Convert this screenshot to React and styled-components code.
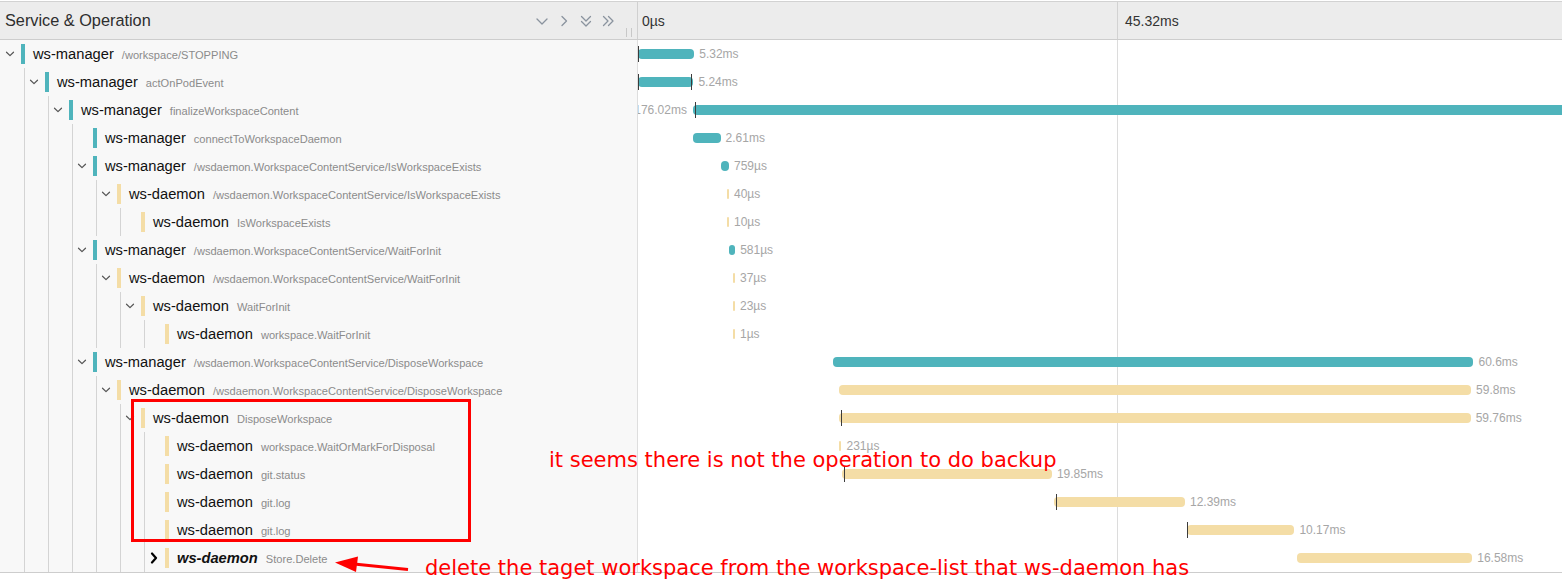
import React from 'react';
import styled, { createGlobalStyle } from 'styled-components';

const GlobalStyle = createGlobalStyle`
  html, body {
    margin: 0;
    padding: 0;
    background: #fff;
  }
  body {
    font-family: "Liberation Sans", Arial, sans-serif;
  }
`;

const TEAL = '#4fb4bc';
const SAND = '#f4dda6';
const PX_PER_MS = 479 / 45.32;

const spans = [
  { depth: 0, service: 'ws-manager', op: '/workspace/STOPPING', color: TEAL, toggle: 'open', start: 0, dur: 5.32, label: '5.32ms', logs: [0] },
  { depth: 1, service: 'ws-manager', op: 'actOnPodEvent', color: TEAL, toggle: 'open', start: 0, dur: 5.24, label: '5.24ms', logs: [0, 5.0] },
  { depth: 2, service: 'ws-manager', op: 'finalizeWorkspaceContent', color: TEAL, toggle: 'open', start: 5.2, dur: 176.02, label: '176.02ms', labelLeft: true, logs: [5.39] },
  { depth: 3, service: 'ws-manager', op: 'connectToWorkspaceDaemon', color: TEAL, start: 5.2, dur: 2.61, label: '2.61ms' },
  { depth: 3, service: 'ws-manager', op: '/wsdaemon.WorkspaceContentService/IsWorkspaceExists', color: TEAL, toggle: 'open', start: 7.85, dur: 0.759, label: '759µs' },
  { depth: 4, service: 'ws-daemon', op: '/wsdaemon.WorkspaceContentService/IsWorkspaceExists', color: SAND, toggle: 'open', start: 8.42, dur: 0.04, label: '40µs' },
  { depth: 5, service: 'ws-daemon', op: 'IsWorkspaceExists', color: SAND, start: 8.42, dur: 0.01, label: '10µs' },
  { depth: 3, service: 'ws-manager', op: '/wsdaemon.WorkspaceContentService/WaitForInit', color: TEAL, toggle: 'open', start: 8.61, dur: 0.581, label: '581µs' },
  { depth: 4, service: 'ws-daemon', op: '/wsdaemon.WorkspaceContentService/WaitForInit', color: SAND, toggle: 'open', start: 8.99, dur: 0.037, label: '37µs' },
  { depth: 5, service: 'ws-daemon', op: 'WaitForInit', color: SAND, toggle: 'open', start: 8.99, dur: 0.023, label: '23µs' },
  { depth: 6, service: 'ws-daemon', op: 'workspace.WaitForInit', color: SAND, start: 8.99, dur: 0.001, label: '1µs' },
  { depth: 3, service: 'ws-manager', op: '/wsdaemon.WorkspaceContentService/DisposeWorkspace', color: TEAL, toggle: 'open', start: 18.45, dur: 60.6, label: '60.6ms' },
  { depth: 4, service: 'ws-daemon', op: '/wsdaemon.WorkspaceContentService/DisposeWorkspace', color: SAND, toggle: 'open', start: 19.02, dur: 59.8, label: '59.8ms' },
  { depth: 5, service: 'ws-daemon', op: 'DisposeWorkspace', color: SAND, toggle: 'open', start: 19.02, dur: 59.76, label: '59.76ms', logs: [19.21] },
  { depth: 6, service: 'ws-daemon', op: 'workspace.WaitOrMarkForDisposal', color: SAND, start: 19.02, dur: 0.231, label: '231µs' },
  { depth: 6, service: 'ws-daemon', op: 'git.status', color: SAND, start: 19.31, dur: 19.85, label: '19.85ms', logs: [19.49] },
  { depth: 6, service: 'ws-daemon', op: 'git.log', color: SAND, start: 39.36, dur: 12.39, label: '12.39ms', logs: [39.55] },
  { depth: 6, service: 'ws-daemon', op: 'git.log', color: SAND, start: 51.94, dur: 10.17, label: '10.17ms', logs: [51.94] },
  { depth: 6, service: 'ws-daemon', op: 'Store.Delete', color: SAND, toggle: 'closed', emphasis: true, start: 62.35, dur: 16.58, label: '16.58ms' },
];

const Page = styled.div`
  position: relative;
  padding-top: 1px;
  width: 1562px;
  height: 587px;
  overflow: hidden;
`;

const Header = styled.div`
  display: flex;
  height: 37px;
  background: #ececec;
  border-top: 1px solid #d2d2d2;
  border-bottom: 1px solid #cdcdcd;
`;

const HeaderLeft = styled.div`
  width: 638px;
  box-sizing: border-box;
  border-right: 1px solid #d0d0d0;
  display: flex;
  align-items: center;
  padding-left: 5px;
  padding-right: 5px;
`;

const Title = styled.div`
  font-size: 16.3px;
  color: #2e2e2e;
  flex: 1;
`;

const Controls = styled.div`
  display: flex;
  align-items: center;
  gap: 8px;
  margin-right: 11px;
`;

const ControlIcon = styled.svg`
  width: 14px;
  height: 14px;
  fill: none;
  stroke: #8a939e;
  stroke-width: 1.3;
  stroke-linecap: round;
  stroke-linejoin: round;
`;

const Grip = styled.div`
  align-self: flex-end;
  margin-bottom: 2px;
  width: 4px;
  height: 9px;
  border-left: 1px solid #c8c8c8;
  border-right: 1px solid #c8c8c8;
`;

const HeaderRight = styled.div`
  flex: 1;
  display: flex;
  align-items: center;
  background: linear-gradient(#d2d2d2, #d2d2d2) no-repeat 479px 0 / 1px 100%;
`;

const TickLabel = styled.div`
  font-size: 14px;
  color: #333;
  width: ${(p) => p.$width}px;
  padding-left: 4px;
`;

const Rows = styled.div`
  border-bottom: 1px solid #cdcdcd;
`;

const Row = styled.div`
  display: flex;
  height: 28px;
`;

const NameCell = styled.div`
  width: 638px;
  box-sizing: border-box;
  border-right: 1px solid #dedede;
  background: #f8f8f8;
  display: flex;
  align-items: center;
  padding-left: 1px;
  overflow: hidden;
  white-space: nowrap;
`;

const Guide = styled.span`
  flex: none;
  width: 24px;
  height: 100%;
  box-sizing: border-box;
  border-right: 1px solid #d4d4d4;
`;

const Toggle = styled.span`
  flex: none;
  width: 20px;
  display: flex;
  justify-content: center;
  padding-right: 2px;
  box-sizing: border-box;
`;

const Chevron = styled.svg`
  fill: none;
  stroke: ${(p) => (p.$closed ? '#000' : '#555')};
  stroke-width: ${(p) => (p.$closed ? 2.2 : 1.2)};
  stroke-linecap: round;
  stroke-linejoin: round;
`;

const ColorBar = styled.span`
  flex: none;
  width: 4px;
  height: 20px;
  background: ${(p) => p.$color};
`;

const Names = styled.span`
  display: flex;
  align-items: baseline;
  margin-left: 8px;
`;

const Service = styled.span`
  font-size: 14.7px;
  color: #111;
  font-weight: ${(p) => (p.$emphasis ? 'bold' : 'normal')};
  font-style: ${(p) => (p.$emphasis ? 'italic' : 'normal')};
`;

const Operation = styled.span`
  font-size: 11.1px;
  color: #8b8b8b;
  margin-left: 8px;
`;

const TimelineCell = styled.div`
  flex: 1;
  position: relative;
  overflow: hidden;
  background: linear-gradient(#dcdcdc, #dcdcdc) no-repeat 479px 0 / 1px 100%;
`;

const SpanBar = styled.div`
  position: absolute;
  top: 9px;
  height: 10px;
  display: flex;
  align-items: center;
`;

const Bar = styled.span`
  flex: none;
  height: 10px;
  border-radius: ${(p) => (p.$thin ? 1 : 4)}px;
  background: ${(p) => p.$color};
`;

const Duration = styled.span`
  font-size: 12px;
  color: #a6a6a6;
  white-space: nowrap;
  margin-left: 5px;
  ${(p) =>
    p.$left &&
    `
    position: absolute;
    right: 100%;
    margin-left: 0;
    margin-right: 6px;
  `}
`;

const LogTick = styled.span`
  position: absolute;
  top: 6px;
  width: 1px;
  height: 16px;
  background: #3c3c3c;
`;

const RedBox = styled.div`
  position: absolute;
  left: 131px;
  top: 399px;
  width: 340px;
  height: 143px;
  box-sizing: border-box;
  border: 3px solid #ff0000;
`;

const Note = styled.div`
  position: absolute;
  left: ${(p) => p.$x}px;
  top: ${(p) => p.$y}px;
  font-family: "DejaVu Sans", sans-serif;
  font-size: 21px;
  line-height: 21px;
  color: #ff0000;
  white-space: nowrap;
`;

const Arrow = styled.svg`
  position: absolute;
  left: 330px;
  top: 550px;
  width: 85px;
  height: 28px;
`;

const ChevronDown = () => (
  <ControlIcon viewBox="0 0 14 14">
    <polyline points="2,5 7,10 12,5" />
  </ControlIcon>
);

const ChevronRight = () => (
  <ControlIcon viewBox="0 0 14 14">
    <polyline points="5,2.5 9.5,7 5,11.5" />
  </ControlIcon>
);

const ChevronsDown = () => (
  <ControlIcon viewBox="0 0 14 14">
    <polyline points="2.5,2.5 7,7 11.5,2.5" />
    <polyline points="2.5,7.5 7,12 11.5,7.5" />
  </ControlIcon>
);

const ChevronsRight = () => (
  <ControlIcon viewBox="0 0 14 14">
    <polyline points="2.5,2.5 7,7 2.5,11.5" />
    <polyline points="7.5,2.5 12,7 7.5,11.5" />
  </ControlIcon>
);

const RowToggle = ({ state }) => (
  <Toggle>
    {state === 'open' && (
      <Chevron width="10" height="6" viewBox="0 0 10 6">
        <polyline points="1.5,1.2 5,4.6 8.5,1.2" />
      </Chevron>
    )}
    {state === 'closed' && (
      <Chevron $closed width="8" height="12" viewBox="0 0 8 12">
        <polyline points="2,1.5 6,6 2,10.5" />
      </Chevron>
    )}
  </Toggle>
);

const SpanRow = ({ span }) => {
  const left = span.start * PX_PER_MS;
  const width = Math.max(2, span.dur * PX_PER_MS);
  return (
    <Row>
      <NameCell>
        {Array.from({ length: span.depth }, (_, i) => (
          <Guide key={i} />
        ))}
        <RowToggle state={span.toggle} />
        <ColorBar $color={span.color} />
        <Names>
          <Service $emphasis={span.emphasis}>{span.service}</Service>
          <Operation>{span.op}</Operation>
        </Names>
      </NameCell>
      <TimelineCell>
        <SpanBar style={{ left }}>
          {span.labelLeft && <Duration $left>{span.label}</Duration>}
          <Bar $color={span.color} $thin={width < 4} style={{ width }} />
          {!span.labelLeft && <Duration>{span.label}</Duration>}
        </SpanBar>
        {(span.logs || []).map((t, i) => (
          <LogTick key={i} style={{ left: t * PX_PER_MS }} />
        ))}
      </TimelineCell>
    </Row>
  );
};

export default function App() {
  return (
    <Page>
      <GlobalStyle />
      <Header>
        <HeaderLeft>
          <Title>Service &amp; Operation</Title>
          <Controls>
            <ChevronDown />
            <ChevronRight />
            <ChevronsDown />
            <ChevronsRight />
          </Controls>
          <Grip />
        </HeaderLeft>
        <HeaderRight>
          <TickLabel $width={479}>0µs</TickLabel>
          <TickLabel>45.32ms</TickLabel>
        </HeaderRight>
      </Header>
      <Rows>
        {spans.map((s, i) => (
          <SpanRow key={i} span={s} />
        ))}
      </Rows>

      <RedBox />
      <Note $x={549} $y={450}>it seems there is not the operation to do backup</Note>
      <Note $x={425} $y={558}>delete the taget workspace from the workspace-list that ws-daemon has</Note>
      <Arrow viewBox="0 0 85 28">
        <line x1="78" y1="19.5" x2="24" y2="14" stroke="#ff0000" strokeWidth="3" />
        <polygon points="5,12.5 28,6.5 26,22" fill="#ff0000" />
      </Arrow>
    </Page>
  );
}
